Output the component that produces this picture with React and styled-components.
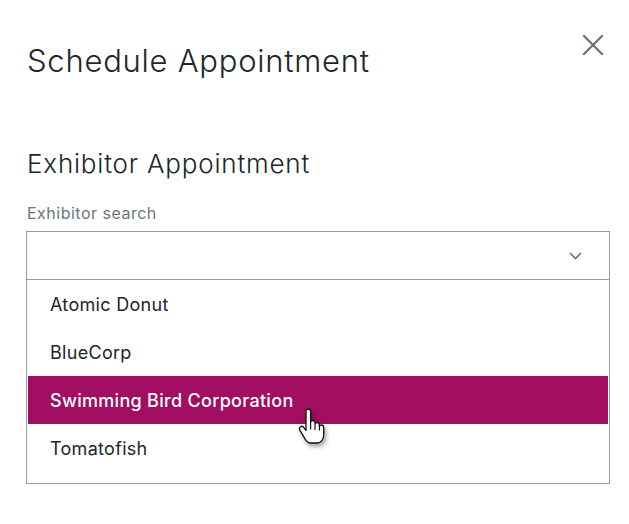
import React from "react";
import styled, { createGlobalStyle } from "styled-components";

const Global = createGlobalStyle`
  html, body { margin: 0; padding: 0; background: #ffffff; }
  body { font-family: Inter, Roboto, "Noto Sans", sans-serif; color: #212529; }
`;

const Page = styled.div`
  width: 629px;
  height: 524px;
  box-sizing: border-box;
  padding: 0 20px 0 26px;
  display: flex;
  flex-direction: column;
`;

const Header = styled.div`
  display: flex;
  align-items: flex-start;
  justify-content: space-between;
  padding-top: 42px;
  height: 115px;
  box-sizing: border-box;
`;

const Title = styled.h1`
  margin: 0 0 0 1px;
  font-size: 31px;
  font-weight: 300;
  line-height: 38px;
  letter-spacing: 0.75px;
  color: #212529;
`;

const Close = styled.button`
  border: 0;
  background: none;
  padding: 0;
  margin: -9px 4px 0 0;
  width: 24px;
  height: 24px;
  display: flex;
  align-items: center;
  justify-content: center;
  cursor: pointer;
`;

const Section = styled.h2`
  margin: 34px 0 0 1px;
  font-size: 26px;
  font-weight: 300;
  line-height: 30px;
  letter-spacing: 0.8px;
  color: #212529;
`;

const Label = styled.label`
  display: block;
  margin: 24px 0 0 1px;
  font-size: 16px;
  line-height: 20px;
  letter-spacing: 0.5px;
  color: #6c757d;
`;

const Combo = styled.div`
  margin-top: 8px;
  width: 584px;
  border: 1px solid #9a9da3;
  box-sizing: border-box;
  display: flex;
  flex-direction: column;
`;

const Control = styled.div`
  height: 47px;
  border-bottom: 1px solid #9a9da3;
  display: flex;
  align-items: center;
  justify-content: flex-end;
  padding-right: 27px;
`;

const List = styled.ul`
  list-style: none;
  margin: 0;
  padding: 0 1px 11px 1px;
`;

const Item = styled.li`
  position: relative;
  height: 48px;
  display: flex;
  align-items: center;
  padding-left: 22px;
  font-size: 18px;
  letter-spacing: 0.3px;
  font-weight: ${(p) => (p.$active ? 500 : 400)};
  color: ${(p) => (p.$active ? "#ffffff" : "#212529")};
  background: ${(p) => (p.$active ? "#a20e62" : "transparent")};
`;

const Pointer = styled.svg`
  position: absolute;
  left: 270px;
  top: 32px;
  filter: drop-shadow(2px 3px 2px rgba(0, 0, 0, 0.35));
`;

function HandCursor() {
  return (
    <Pointer width="30" height="40" viewBox="0 0 30 40">
      <path
        d="M8 3.5c0-1.4 1-2.5 2.3-2.5s2.3 1.1 2.3 2.5V14c.3-.9 1.2-1.5 2.2-1.5 1.3 0 2.2 1 2.2 2.3v1.2c.3-.9 1.2-1.5 2.2-1.5 1.3 0 2.2 1 2.2 2.3v1.5c.4-.8 1.2-1.3 2.1-1.3 1.3 0 2.2 1 2.2 2.3v7.7c0 4.2-2.8 8-6.6 8h-6.7c-2 0-3.4-1-4.5-2.6L2 22.3c-.8-1.1-.6-2.6.4-3.4 1-.8 2.4-.6 3.2.4L8 22.4V3.5z"
        fill="#ffffff"
        stroke="#111"
        strokeWidth="1.3"
        strokeLinejoin="round"
      />
      <path d="M12.6 14v7M17 16.5v5M21.4 18v4" stroke="#111" strokeWidth="1.2" strokeLinecap="round" />
    </Pointer>
  );
}

const options = ["Atomic Donut", "BlueCorp", "Swimming Bird Corporation", "Tomatofish"];

export default function App() {
  return (
    <>
      <Global />
      <Page>
        <Header>
          <Title>Schedule Appointment</Title>
          <Close aria-label="Close">
            <svg width="22" height="22" viewBox="0 0 22 22">
              <path d="M2 2L20 20M20 2L2 20" stroke="#6b7078" strokeWidth="2.2" strokeLinecap="square" />
            </svg>
          </Close>
        </Header>
        <Section>Exhibitor Appointment</Section>
        <Label>Exhibitor search</Label>
        <Combo>
          <Control>
            <svg width="13" height="8" viewBox="0 0 13 8">
              <path d="M1 1l5.5 5.5L12 1" fill="none" stroke="#6b7078" strokeWidth="1.6" />
            </svg>
          </Control>
          <List>
            {options.map((o, i) => (
              <Item key={o} $active={i === 2}>
                {o}
                {i === 2 && <HandCursor />}
              </Item>
            ))}
          </List>
        </Combo>
      </Page>
    </>
  );
}
